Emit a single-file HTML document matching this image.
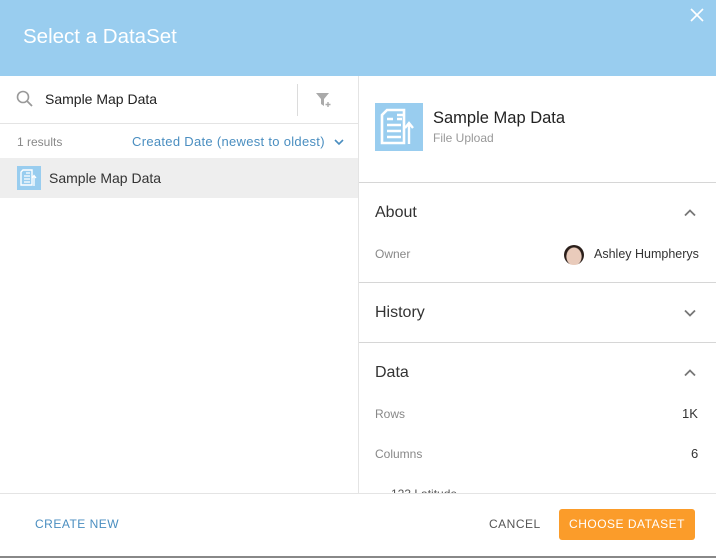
<!DOCTYPE html>
<html><head><style>
*{margin:0;padding:0;box-sizing:border-box}
body{width:716px;height:558px;overflow:hidden;background:#fff;font-family:"Liberation Sans",sans-serif;position:relative;color:#333}
.hdr{position:absolute;left:0;top:0;width:716px;height:76px;background:#99cdef}
.hdr .t{position:absolute;left:23px;top:25px;font-size:20.5px;color:#fff}
.x{position:absolute;left:690px;top:8px}
.abs{position:absolute}
.line{position:absolute;background:#dcdcdc}
.sec{position:absolute;left:375px;font-size:16px;color:#333}
.lbl{position:absolute;font-size:12px;color:#888}
.val{position:absolute;font-size:13px;color:#333;text-align:right}
</style></head><body>
<div class="hdr"><div class="t">Select a DataSet</div>
<svg class="x" width="14" height="14" viewBox="0 0 14 14"><path d="M1 1L13 13M13 1L1 13" stroke="#fff" stroke-width="1.6"/></svg></div>

<svg class="abs" style="left:16px;top:90px" width="18" height="18" viewBox="0 0 18 18"><circle cx="7" cy="7" r="5.5" fill="none" stroke="#999" stroke-width="1.6"/><path d="M11 11L16 16" stroke="#999" stroke-width="1.8"/></svg>
<div class="abs" style="left:45px;top:91px;font-size:14px;color:#222">Sample Map Data</div>
<div class="line" style="left:297px;top:84px;width:1px;height:32px"></div>
<svg class="abs" style="left:315px;top:92px" width="18" height="16" viewBox="0 0 18 16"><path d="M1 1H14L9 7V14L6 12V7Z" fill="#aaa"/><path d="M13 10V15M10.5 12.5H15.5" stroke="#aaa" stroke-width="1.4"/></svg>
<div class="line" style="left:0;top:123px;width:358px;height:1px;background:#e4e4e4"></div>
<div class="abs" style="left:17px;top:135px;font-size:12px;color:#888">1 results</div>
<div class="abs" style="left:132px;top:134px;font-size:13px;color:#4a8ec0;letter-spacing:0.3px">Created Date (newest to oldest)</div>
<svg class="abs" style="left:334px;top:138px" width="10" height="8" viewBox="0 0 10 8"><path d="M1 2L5 6L9 2" stroke="#4a8ec0" stroke-width="1.6" fill="none"/></svg>
<div class="abs" style="left:0;top:158px;width:358px;height:40px;background:#eeeeee"></div>
<svg class="abs" style="left:17px;top:166px" width="24" height="24" viewBox="0 0 24 24"><rect width="24" height="24" fill="#99cdef"/><path d="M6 4H15V19H4V6Z" fill="none" stroke="#fff" stroke-width="1.4"/><path d="M7 10H13M7 13H13M7 16H13M9 7H13" stroke="#fff" stroke-width="1.2"/><path d="M17 20V10M15 12L17 9.5L19 12" stroke="#fff" stroke-width="1.3" fill="none"/></svg>
<div class="abs" style="left:49px;top:170px;font-size:14px;color:#333">Sample Map Data</div>
<div class="line" style="left:358px;top:76px;width:1px;height:417px;background:#e4e4e4"></div>

<svg class="abs" style="left:375px;top:103px" width="48" height="48" viewBox="0 0 48 48"><rect width="48" height="48" fill="#99cdef"/><path d="M12 7H29V40H7V12Z" fill="none" stroke="#fff" stroke-width="2.6"/><path d="M12 22H26M12 28H26M12 34H26M12 16H18M22 12H28M22 16H27" stroke="#fff" stroke-width="2.4"/><path d="M34 41V20M30 25L34 20L38 25" stroke="#fff" stroke-width="2.4" fill="none"/></svg>
<div class="abs" style="left:433px;top:109px;font-size:16.5px;color:#222">Sample Map Data</div>
<div class="abs" style="left:433px;top:131px;font-size:12px;color:#999">File Upload</div>
<div class="line" style="left:359px;top:182px;width:357px;height:1px;background:#d6d6d6"></div>
<div class="sec" style="top:204px">About</div>
<svg class="abs" style="left:684px;top:209px" width="12" height="8" viewBox="0 0 12 8"><path d="M1 6.5L6 1.5L11 6.5" stroke="#777" stroke-width="1.8" fill="none"/></svg>
<div class="lbl" style="left:375px;top:247px">Owner</div>
<div class="abs" style="left:564px;top:245px;width:20px;height:20px;border-radius:50%;background:radial-gradient(ellipse 40% 48% at 50% 58%,#e9cbbb 0 90%,#2a1e1a 100%)"></div>
<div class="val" style="left:594px;top:247px;font-size:12.5px">Ashley Humpherys</div>
<div class="line" style="left:359px;top:282px;width:357px;height:1px;background:#d6d6d6"></div>
<div class="sec" style="top:304px">History</div>
<svg class="abs" style="left:684px;top:309px" width="12" height="8" viewBox="0 0 12 8"><path d="M1 1.5L6 6.5L11 1.5" stroke="#777" stroke-width="1.8" fill="none"/></svg>
<div class="line" style="left:359px;top:342px;width:357px;height:1px;background:#d6d6d6"></div>
<div class="sec" style="top:364px">Data</div>
<svg class="abs" style="left:684px;top:369px" width="12" height="8" viewBox="0 0 12 8"><path d="M1 6.5L6 1.5L11 6.5" stroke="#777" stroke-width="1.8" fill="none"/></svg>
<div class="lbl" style="left:375px;top:407px">Rows</div>
<div class="val" style="left:682px;top:406px">1K</div>
<div class="lbl" style="left:375px;top:447px">Columns</div>
<div class="val" style="left:691px;top:446px">6</div>
<div class="abs" style="left:391px;top:487px;height:6px;overflow:hidden;font-size:12px;color:#555;line-height:14px">123 Latitude</div>

<div class="line" style="left:0;top:493px;width:716px;height:1px;background:#e4e4e4"></div>
<div class="abs" style="left:35px;top:517px;font-size:12px;color:#4a8ec0;letter-spacing:0.5px">CREATE NEW</div>
<div class="abs" style="left:489px;top:517px;font-size:12px;color:#555;letter-spacing:0.5px">CANCEL</div>
<div class="abs" style="left:559px;top:509px;width:136px;height:31px;background:#fb9c2a;border-radius:3px;color:#fff;font-size:12px;letter-spacing:0.5px;text-align:center;line-height:31px">CHOOSE DATASET</div>
<div class="line" style="left:0;top:556px;width:716px;height:2px;background:#888"></div>
</body></html>
